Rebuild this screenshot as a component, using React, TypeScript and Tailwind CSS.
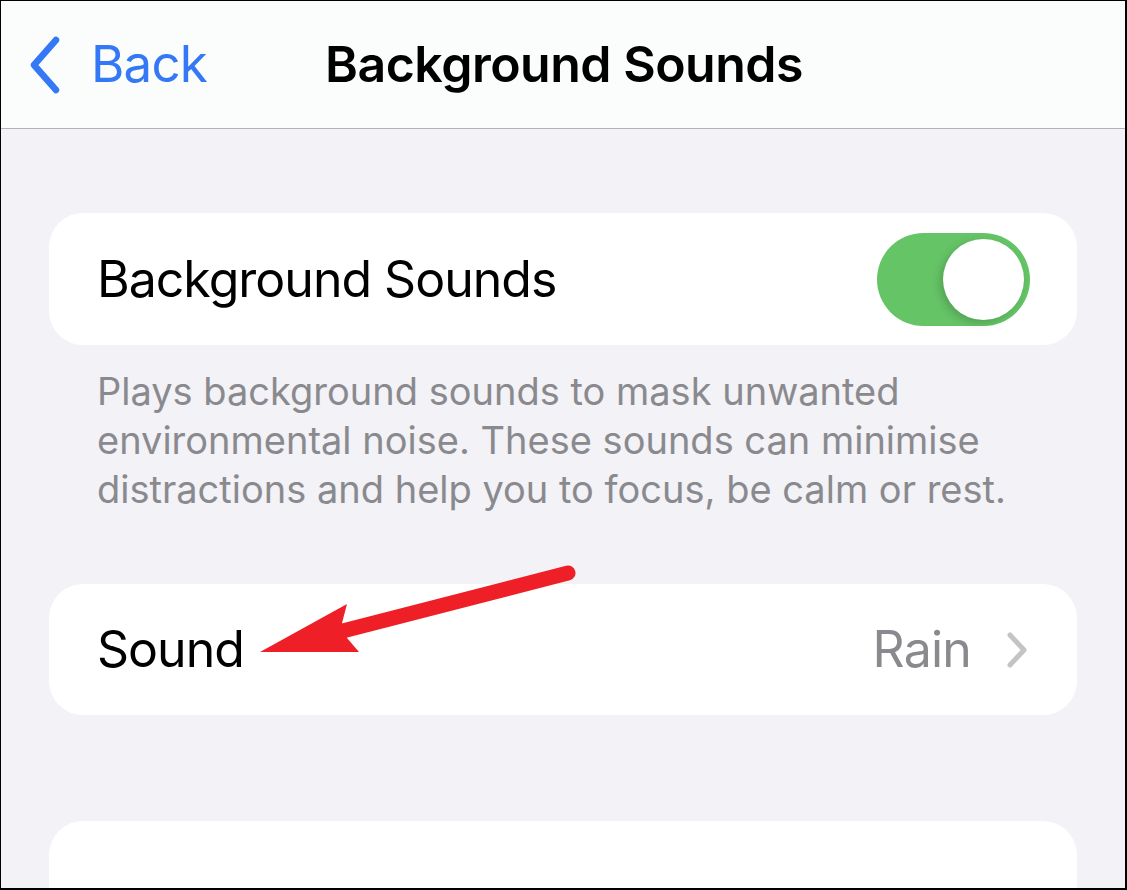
import React from 'react';

const font = { fontFamily: 'Inter, "Noto Sans", sans-serif' };

function BackChevron() {
  return (
    <svg width="40" height="62" viewBox="0 0 40 62" className="shrink-0">
      <path d="M31 6 L9 31 L31 56" fill="none" stroke="#3478f6" strokeWidth="6.5" strokeLinecap="round" strokeLinejoin="round" />
    </svg>
  );
}

function Toggle() {
  return (
    <div className="w-[153px] h-[93px] rounded-full bg-[#65c466] flex items-center justify-end pr-[6px]">
      <div className="w-[81px] h-[81px] rounded-full bg-white shadow-[-3px_3px_8px_rgba(0,0,0,0.18)]" />
    </div>
  );
}

function RowChevron() {
  return (
    <svg width="24" height="38" viewBox="0 0 24 38">
      <path d="M5 4 L19 19 L5 34" fill="none" stroke="#c4c4c7" strokeWidth="5" strokeLinecap="round" strokeLinejoin="round" />
    </svg>
  );
}

export default function App() {
  return (
    <div style={font} className="relative w-[1127px] h-[890px] overflow-hidden bg-[#f2f2f7] border-l border-t border-r-2 border-b-2 border-black flex flex-col">
      {/* nav bar */}
      <div className="h-[128px] shrink-0 bg-[#fbfcfc] border-b-[1.5px] border-[#b3b3b3] relative flex items-center">
        <div className="flex items-center pl-[24px] gap-[26px] text-[#3478f6] text-[51px] tracking-[-0.8px]">
          <BackChevron />
          <span className="-mt-[1px]">Back</span>
        </div>
        <div className="absolute left-0 right-0 top-0 bottom-0 flex items-center justify-center pointer-events-none">
          <span className="text-black text-[50px] font-semibold tracking-[-0.5px] -mt-[1px] pl-[2px]">Background Sounds</span>
        </div>
      </div>

      <div className="flex flex-col px-[48px] pt-[84px]">
        <div className="h-[132px] bg-white rounded-[34px] flex items-center justify-between pl-[48px] pr-[47px]">
          <span className="text-black text-[50px] tracking-[-1px]">Background Sounds</span>
          <Toggle />
        </div>

        <p className="pl-[48px] pt-[22px] text-[#8a8a8e] text-[38px] leading-[49px] tracking-[0px] whitespace-nowrap">
          Plays background sounds to mask unwanted<br />
          environmental noise. These sounds can minimise<br />
          distractions and help you to focus, be calm or rest.
        </p>

        <div className="mt-[70px] h-[131px] bg-white rounded-[34px] flex items-center justify-between pl-[48px] pr-[48px]">
          <span className="text-black text-[50px] tracking-[-1px]">Sound</span>
          <div className="flex items-center gap-[34px]">
            <span className="text-[#8a8a8e] text-[50px] tracking-[-0.8px]">Rain</span>
            <RowChevron />
          </div>
        </div>

        <div className="mt-[106px] h-[120px] bg-white rounded-t-[34px]" />
      </div>

      {/* annotation arrow */}
      <svg className="absolute left-0 top-0 pointer-events-none" width="1127" height="890">
        <line x1="567" y1="572" x2="330" y2="633" stroke="#ee1f27" strokeWidth="15" strokeLinecap="round" />
        <polygon points="259,651 346,603 341,622 346,637 358,651" fill="#ee1f27" />
      </svg>
    </div>
  );
}
